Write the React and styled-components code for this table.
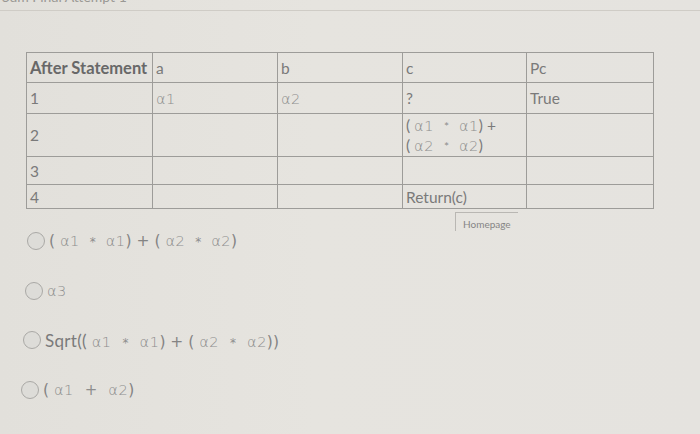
import React from 'react';
import styled, { createGlobalStyle } from 'styled-components';

const GlobalStyle = createGlobalStyle`
  html, body {
    margin: 0;
    padding: 0;
    background: #e4e2dd;
  }
  body {
    font-family: Lato, "Open Sans", sans-serif;
    color: #7b7b7b;
  }
`;

// page wrapper
const Page = styled.div`
  width: 700px;
  height: 434px;
  overflow: hidden;
  background: linear-gradient(90deg, #e2e0db 0%, #e6e4df 45%, #e5e3df 100%);
`;

const TitleBar = styled.div`
  height: 10px;
  border-bottom: 1px solid #cfccc6;
  overflow: hidden;
`;

const TitleText = styled.div`
  font-size: 14px;
  line-height: 14px;
  margin-top: -10px;
  margin-left: 2px;
  color: #9a9894;
`;

const Content = styled.div`
  padding: 41px 0 0 26px;
`;

const Table = styled.table`
  border-collapse: collapse;
  width: 627px;
  table-layout: fixed;
`;

const Cell = styled.td`
  border: 1.5px solid #9d9c99;
  padding: 0 0 0 3px;
  height: ${(p) => p.$h}px;
  vertical-align: middle;
  font-size: ${(p) => (p.$bold ? 16.5 : 15.5)}px;
  font-weight: ${(p) => (p.$bold ? 700 : 400)};
  color: ${(p) => (p.$bold ? '#686868' : '#7a7a7a')};
  white-space: nowrap;
  line-height: 18px;
`;

const Sym = styled.span`
  font-family: "DejaVu Sans", sans-serif;
  font-weight: 300;
  font-size: 14.5px;
  color: #8e8e8e;
  letter-spacing: 0.5px;
`;

const Op = styled.span`
  display: inline-block;
  margin: 0 ${(p) => p.$gap || 10}px;
  color: #8e8e8e;
  font-size: ${(p) => p.$size || 12}px;
`;

const Expr = styled.div`
  line-height: 19px;
  padding-top: ${(p) => p.$pt || 0}px;
`;

const HomeRow = styled.div`
  display: flex;
  padding: 3px 0 0 429px;
  height: 19px;
`;

const HomeTab = styled.div`
  border-top: 1px solid #b9b7b3;
  border-left: 1px solid #b9b7b3;
  padding: 5px 0 0 7px;
  width: 55px;
  font-size: 10px;
  color: #858585;
`;

const Options = styled.div`
  display: flex;
  flex-direction: column;
  gap: 29.5px;
  padding-top: 0;
`;

const Option = styled.label`
  display: flex;
  align-items: center;
  gap: 4px;
  height: 20px;
  margin-left: ${(p) => p.$shift}px;
  color: #808080;
`;

const Radio = styled.span`
  width: 16px;
  height: 16px;
  border-radius: 50%;
  border: 1.5px solid #aaa9a6;
  background: #dddcd8;
  flex: none;
`;

const OptText = styled.span`
  font-family: "DejaVu Sans", sans-serif;
  font-size: 15.5px;
  color: #848484;
  white-space: nowrap;
`;

const FnName = styled.span`
  font-family: Lato, sans-serif;
  font-size: 17px;
  color: #7a7a7a;
  letter-spacing: 0.3px;
`;

const a = (n) => <Sym>α{n}</Sym>;

const rows = [
  { h: 30, cells: ['1', a(1), a(2), '?', 'True'] },
  {
    h: 41,
    cells: [
      '2',
      '',
      '',
      <div>
        <Expr $pt={2}>
          ( {a(1)}<Op>*</Op>{a(1)}) +
        </Expr>
        <Expr>
          ( {a(2)}<Op>*</Op>{a(2)})
        </Expr>
      </div>,
      '',
    ],
  },
  { h: 27, cells: ['3', '', '', '', ''] },
  { h: 23, cells: ['4', '', '', 'Return(c)', ''] },
];

const options = [
  { shift: 1, text: <>( {a(1)}<Op>*</Op>{a(1)}) + ( {a(2)}<Op>*</Op>{a(2)})</> },
  { shift: -1, text: <>{a(3)}</> },
  {
    shift: -3,
    text: (
      <>
        <FnName>Sqrt((</FnName> {a(1)}
        <Op $gap={11}>*</Op>{a(1)}) + ( {a(2)}<Op $gap={11}>*</Op>{a(2)}))
      </>
    ),
  },
  { shift: -5, text: <>( {a(1)}<Op $size={15} $gap={11}>+</Op>{a(2)})</> },
];

export default function App() {
  return (
    <>
      <GlobalStyle />
      <Page>
        <TitleBar>
          <TitleText>Sum Final Attempt 1</TitleText>
        </TitleBar>
        <Content>
          <Table>
            <colgroup>
              <col style={{ width: 126 }} />
              <col style={{ width: 125 }} />
              <col style={{ width: 125 }} />
              <col style={{ width: 124 }} />
              <col style={{ width: 127 }} />
            </colgroup>
            <tbody>
              <tr>
                <Cell $h={29} $bold>After Statement</Cell>
                <Cell $h={29}>a</Cell>
                <Cell $h={29}>b</Cell>
                <Cell $h={29}>c</Cell>
                <Cell $h={29}>Pc</Cell>
              </tr>
              {rows.map((r, i) => (
                <tr key={i}>
                  {r.cells.map((c, j) => (
                    <Cell key={j} $h={r.h}>
                      {c}
                    </Cell>
                  ))}
                </tr>
              ))}
            </tbody>
          </Table>
          <HomeRow>
            <HomeTab>Homepage</HomeTab>
          </HomeRow>
          <Options>
            {options.map((o, i) => (
              <Option key={i} $shift={o.shift}>
                <Radio />
                <OptText>{o.text}</OptText>
              </Option>
            ))}
          </Options>
        </Content>
      </Page>
    </>
  );
}
